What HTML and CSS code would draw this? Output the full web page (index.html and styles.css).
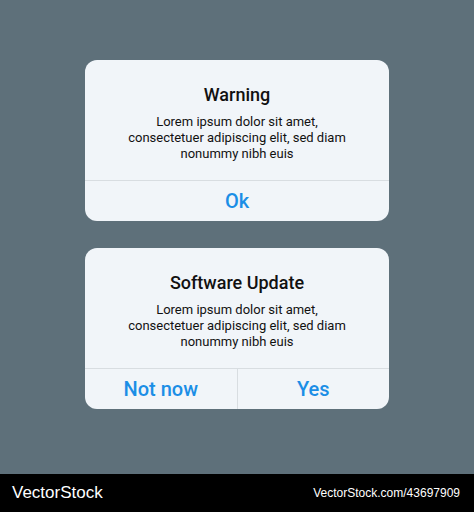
FILE: index.html
```html
<!DOCTYPE html>
<html>
<head>
<meta charset="utf-8">
<link rel="stylesheet" href="styles.css">
</head>
<body>
<div class="stage">
  <div class="dialog">
    <div class="content">
      <div class="title">Warning</div>
      <div class="text">Lorem ipsum dolor sit amet,<br>consectetuer adipiscing elit, sed diam<br>nonummy nibh euis</div>
    </div>
    <div class="actions">
      <div class="btn">Ok</div>
    </div>
  </div>
  <div class="dialog">
    <div class="content">
      <div class="title">Software Update</div>
      <div class="text">Lorem ipsum dolor sit amet,<br>consectetuer adipiscing elit, sed diam<br>nonummy nibh euis</div>
    </div>
    <div class="actions">
      <div class="btn">Not now</div>
      <div class="btn">Yes</div>
    </div>
  </div>
</div>
<div class="footer">
  <span class="brand">VectorStock</span>
  <span class="ref">VectorStock.com/43697909</span>
</div>
</body>
</html>
```
FILE: styles.css
```css
html, body {
  margin: 0;
  padding: 0;
}
body {
  width: 474px;
  height: 512px;
  background: #5e707a;
  font-family: Roboto, "Noto Sans", sans-serif;
  display: flex;
  flex-direction: column;
  overflow: hidden;
}
.stage {
  flex: 1;
  display: flex;
  flex-direction: column;
  align-items: center;
  padding-top: 60px;
  gap: 27px;
}
.dialog {
  width: 304px;
  background: #f1f5f9;
  border-radius: 12px;
  overflow: hidden;
}
.content {
  height: 120px;
  box-sizing: border-box;
  padding: 23px 10px 0;
  text-align: center;
  color: #111;
}
.title {
  font-size: 18px;
  font-weight: 500;
  line-height: 24px;
  margin-bottom: 7px;
}
.text {
  font-size: 13px;
  line-height: 16px;
}
.actions {
  display: flex;
  border-top: 1px solid #d8dde1;
  height: 40px;
}
.btn {
  flex: 1;
  display: flex;
  align-items: center;
  justify-content: center;
  color: #1b8ee6;
  font-size: 20px;
  font-weight: 500;
}
.btn + .btn {
  border-left: 1px solid #d8dde1;
}
.footer {
  height: 38px;
  background: #000;
  color: #fff;
  display: flex;
  align-items: center;
  justify-content: space-between;
  padding: 0 14px 0 12px;
  font-family: "Liberation Sans", Arial, sans-serif;
}
.brand {
  font-size: 17px;
}
.ref {
  font-size: 12px;
}
```
